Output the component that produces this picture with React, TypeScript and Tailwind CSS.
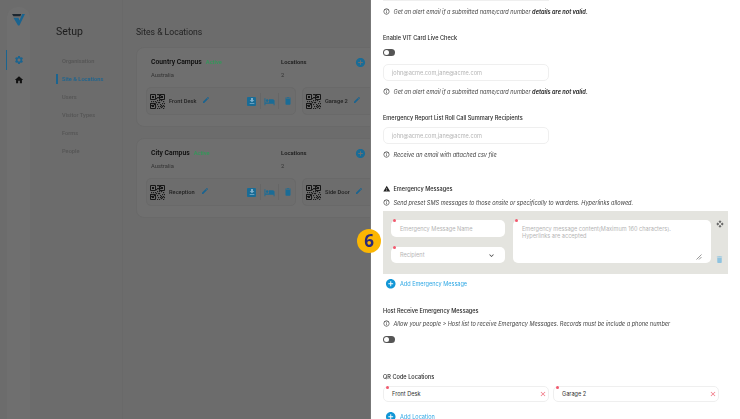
import React from "react";
import {
  MdSettings, MdHome, MdEdit, MdDelete, MdHotel, MdAddCircle, MdFileDownload,
  MdInfoOutline, MdWarning, MdOpenWith, MdKeyboardArrowDown, MdClose,
} from "react-icons/md";

function Qr({ className = "" }: { className?: string }) {
  const cells = [
    [7,0],[8,0],[10,1],[9,2],[7,3],[8,3],[10,3],[1,7],[3,7],[5,7],[7,6],[9,6],[11,6],[13,7],
    [0,9],[2,9],[3,9],[6,8],[8,8],[9,8],[12,9],[14,9],[1,11],[4,10],[7,10],[10,10],[11,11],[13,11],
    [8,12],[10,12],[12,12],[14,12],[7,14],[9,14],[11,13],[13,14],[5,12],[6,4]
  ];
  return (
    <svg viewBox="0 0 15 15" className={`w-[15px] h-[15px] shrink-0 ${className}`}>
      <path fill="none" stroke="#161616" strokeWidth="1" d="M.5.5h5v5h-5zM9.5.5h5v5h-5zM.5 9.5h5v5h-5z" />
      <path fill="#161616" d="M2 2h2v2H2zM11 2h2v2h-2zM2 11h2v2H2z" />
      {cells.map(([x, y], i) => <rect key={i} x={x} y={y} width="1.2" height="1.2" fill="#1b1b1b" />)}
    </svg>
  );
}

function Location({ name, gap, wide }: { name: string; gap: string; wide: boolean }) {
  return (
    <div className={`h-[28px] rounded-[5px] bg-[#6d6d6d] border border-[#696969] flex items-center pl-[3px] shrink-0 ${wide ? "w-[150px]" : "w-[80px]"}`}>
      <Qr />
      <span className="ml-[4px] text-[5.7px] text-[#1f1f1f] font-medium">{name}</span>
      <MdEdit className={`text-[#1a6490] text-[8px] -mt-[2px] ${gap}`} />
      {wide && (
        <div className="ml-auto flex items-center">
          <div className="w-[9px] h-[9px] rounded-[1px] bg-[#1a6c96] flex items-center justify-center">
            <MdFileDownload className="text-[#7fb0cc] text-[8px]" />
          </div>
          <div className="w-px h-[16px] bg-[#666] ml-[4px]" />
          <MdHotel className="text-[#1a6c96] text-[11px] mx-[3px]" />
          <div className="w-px h-[16px] bg-[#666]" />
          <MdDelete className="text-[#1a6c96] text-[10px] ml-[4px] mr-[2px]" />
        </div>
      )}
    </div>
  );
}

function Campus({ title, a, aGap, b, bGap }: { title: string; a: string; aGap: string; b: string; bGap: string }) {
  return (
    <div className="w-[260px] h-[80px] rounded-l-[8px] bg-[#6f6f6f] border border-[#696969] pt-[9px] pl-[14px] overflow-hidden shrink-0">
      <div className="flex h-[10px] items-center">
        <span className="w-[130px] flex items-center">
          <span className="text-[6.8px] font-semibold text-[#0e0e0e]">{title}</span>
          <span className="text-[5.7px] font-medium text-[#2f9a58] ml-[4px]">Active</span>
        </span>
        <span className="text-[5.8px] font-semibold text-[#1c1c1c]">Locations</span>
        <MdAddCircle className="text-[#1a6c96] text-[11px] ml-[48px] mt-[1px]" />
      </div>
      <div className="flex h-[10px] items-center mt-[3px]">
        <span className="w-[130px] text-[5.8px] text-[#333]">Australia</span>
        <span className="text-[5.8px] text-[#333]">2</span>
      </div>
      <div className="flex gap-[6px] -ml-[5px] mt-[7px]">
        <Location name={a} gap={aGap} wide />
        <Location name={b} gap={bGap} wide={false} />
      </div>
    </div>
  );
}

function Hint({ children }: { children: React.ReactNode }) {
  return (
    <div className="flex items-center h-[10px] text-[5.6px] italic text-[#444]">
      <MdInfoOutline className="text-[7px] not-italic text-[#333] shrink-0 -mt-[1px]" />
      <span className="ml-[3.5px] pt-[1px]">{children}</span>
    </div>
  );
}

function Label({ children, className = "" }: { children: React.ReactNode; className?: string }) {
  return <div className={`h-[10px] leading-[11px] text-[5.6px] font-medium text-[#2a2a2a] ${className}`}>{children}</div>;
}

function Toggle({ className = "" }: { className?: string }) {
  return (
    <div className={`w-[12px] h-[7px] rounded-full bg-[#555] flex items-center pl-[1px] ${className}`}>
      <div className="w-[5px] h-[5px] rounded-full bg-white" />
    </div>
  );
}

function Req() {
  return <span className="absolute left-[2px] -top-[1px] w-[2.5px] h-[2.5px] rounded-full bg-[#f2596e]" />;
}

function Email({ className = "" }: { className?: string }) {
  return (
    <div className={`w-[166px] h-[17px] rounded-[5px] border border-[#efefef] bg-white flex items-center pl-[8px] pt-[1px] text-[5.6px] text-[#b5b5b5] ${className}`}>
      john@acme.com,jane@acme.com
    </div>
  );
}

function Add({ children, className = "" }: { children: React.ReactNode; className?: string }) {
  return (
    <div className={`flex items-center h-[10px] pl-[2px] ${className}`}>
      <MdAddCircle className="text-[#1296d6] text-[11.5px] shrink-0" />
      <span className="ml-[3.5px] pt-[1px] text-[5.55px] text-[#2ba6e4]">{children}</span>
    </div>
  );
}

function QrField({ name }: { name: string }) {
  return (
    <div className="relative w-[166px] h-[16px] rounded-[5px] border border-[#efefef] bg-white flex items-center pl-[8px] pr-[1px] text-[5.6px] text-[#333]">
      <Req />
      <span className="pt-[1px]">{name}</span>
      <MdClose className="ml-auto text-[#f0717f] text-[8px]" />
    </div>
  );
}

export default function App() {
  return (
    <div className="relative flex w-[740px] h-[419px] overflow-hidden font-['Roboto',sans-serif]">
      <div className="w-[370px] h-full bg-[#6c6c6c] shrink-0 overflow-hidden">
        <div className="flex h-full blur-[0.35px]">
          <div className="ml-[7px] mt-[7px] w-[23px] rounded-t-[10px] bg-[#6f6f6f] flex flex-col items-center relative shrink-0">
            <svg viewBox="0 0 14 13" className="w-[13px] h-[12px] mt-[7px]">
              <path fill="#1d2730" d="M0 0h10L9 2.5H1.5z" />
              <path fill="#1a6490" d="M1.5 4H7L8 7l3-7h3L8 12.5H6.5z" />
            </svg>
            <div className="absolute -left-[1px] top-[43px] w-[1px] h-[20px] bg-[#1a6490]" />
            <MdSettings className="text-[#1a6490] text-[10px] mt-[29px]" />
            <MdHome className="text-[#111] text-[10px] mt-[10px]" />
          </div>
          <div className="w-[93px] pl-[26px] shrink-0 border-r border-[#696969]">
            <div className="mt-[25px] h-[14px] leading-[14px] text-[10.5px] text-[#1c1c1c]">Setup</div>
            <div className="mt-[17px] text-[5.7px] text-[#555] font-medium pl-[6px]">
              <div className="h-[18px] leading-[10px]">Organisation</div>
              <div className="relative h-[18px] leading-[10px] text-[#1a6490]">
                Site &amp; Locations
                <span className="absolute -left-[6px] -top-[0.5px] w-[1.5px] h-[10px] bg-[#1a6490]" />
              </div>
              <div className="h-[18px] leading-[10px]">Users</div>
              <div className="h-[18px] leading-[10px]">Visitor Types</div>
              <div className="h-[18px] leading-[10px]">Forms</div>
              <div className="h-[18px] leading-[10px]">People</div>
            </div>
          </div>
          <div className="pl-[13px] shrink-0">
            <div className="mt-[25px] h-[14px] leading-[14px] text-[8.6px] text-[#222]">Sites &amp; Locations</div>
            <div className="mt-[8px] flex flex-col gap-[11px]">
              <Campus title="Country Campus" a="Front Desk" aGap="ml-[6px]" b="Garage 2" bGap="ml-[5px]" />
              <Campus title="City Campus" a="Reception" aGap="ml-[6px]" b="Side Door" bGap="ml-[5px]" />
            </div>
          </div>
        </div>
      </div>

      <div className="flex-1 h-full bg-white border-l border-[#777] overflow-hidden">
        <div className="pl-[12px] font-['Inter',sans-serif] blur-[0.35px]">
          <div className="w-[166px] h-px bg-[#efefef]" />
          <div className="mt-[6px]"><Hint>Get an alert email if a submitted name/card number <b className="font-bold text-[#333]">details are not valid.</b></Hint></div>
          <Label className="mt-[16px]">Enable VIT Card Live Check</Label>
          <Toggle className="mt-[6px]" />
          <Email className="mt-[8px]" />
          <div className="mt-[6px]"><Hint>Get an alert email if a submitted name/card number <b className="font-bold text-[#333]">details are not valid.</b></Hint></div>
          <Label className="mt-[16px]">Emergency Report List Roll Call Summary Recipients</Label>
          <Email className="mt-[4px]" />
          <div className="mt-[6px]"><Hint>Receive an email with attached csv file</Hint></div>
          <div className="mt-[24px] flex items-center h-[10px]">
            <MdWarning className="text-[#222] text-[7.5px]" />
            <span className="ml-[3px] pt-[1px] text-[5.6px] font-medium text-[#2a2a2a]">Emergency Messages</span>
          </div>
          <div className="mt-[4px]"><Hint>Send preset SMS messages to those onsite or specifically to wardens. Hyperlinks allowed.</Hint></div>

          <div className="mt-[3px] w-[345px] h-[63px] bg-[#e4e4df] flex pl-[8px] pt-[9px] text-[5.6px] text-[#b5b5b5]">
            <div className="w-[114px] flex flex-col gap-[10px] shrink-0">
              <div className="relative h-[17px] rounded-[5px] bg-white flex items-center pl-[9px] pt-[1px]"><Req />Emergency Message Name</div>
              <div className="relative h-[16px] rounded-[5px] bg-white flex items-center pl-[9px] pr-[9px] pt-[1px]">
                <Req />Recipient
                <MdKeyboardArrowDown className="ml-auto text-[#444] text-[9px]" />
              </div>
            </div>
            <div className="relative ml-[8px] w-[198px] h-[43px] rounded-[5px] bg-white pl-[9px] pt-[6px] leading-[7px] shrink-0">
              <Req />
              Emergency message content(Maximum 160 characters).<br />Hyperlinks are accepted
              <svg viewBox="0 0 6 6" className="absolute right-[9px] bottom-[3px] w-[6px] h-[6px]">
                <path stroke="#555" strokeWidth=".6" d="M.5 5.5l5-5M3 5.5l2.5-2.5" />
              </svg>
            </div>
            <div className="w-[16px] h-[43px] flex flex-col items-center justify-between pl-[1px] shrink-0">
              <MdOpenWith className="text-[#666] text-[8px]" />
              <MdDelete className="text-[#8fc3e0] text-[9px] -mb-[1px]" />
            </div>
          </div>

          <Add className="mt-[5px]">Add Emergency Message</Add>
          <Label className="mt-[17px]">Host Receive Emergency Messages</Label>
          <div className="mt-[3px]"><Hint>Allow your people &gt; Host list to receive Emergency Messages. Records must be include a phone number</Hint></div>
          <Toggle className="mt-[7px]" />
          <Label className="mt-[29px]">QR Code Locations</Label>
          <div className="mt-[4px] flex gap-[4px]">
            <QrField name="Front Desk" />
            <QrField name="Garage 2" />
          </div>
          <Add className="mt-[10px]">Add Location</Add>
        </div>
      </div>

      <div className="absolute left-[357px] top-[229px] w-[24px] h-[24px] rounded-full bg-[#fbb602] flex items-center justify-center text-[17px] font-bold text-[#2b2a78] font-['Open_Sans',sans-serif] blur-[0.35px]">6</div>
    </div>
  );
}
